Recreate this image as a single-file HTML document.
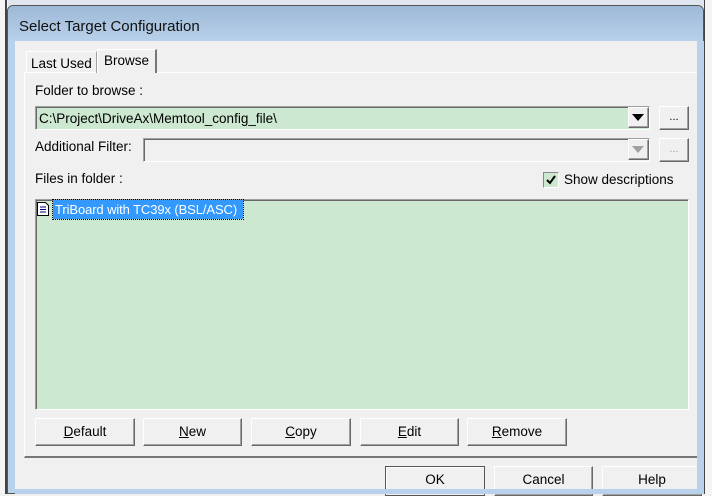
<!DOCTYPE html>
<html><head><style>
*{margin:0;padding:0;box-sizing:border-box}
body{width:712px;height:494px;overflow:hidden;background:#f0f0f0;font-family:"Liberation Sans",sans-serif;font-size:13px;color:#000;position:relative}
.a{position:absolute}
.btn{position:absolute;background:#f0f0f0;border:1px solid;border-color:#fff #696969 #696969 #fff;box-shadow:inset -1px -1px 0 #a0a0a0;text-align:center;font-size:13.5px;line-height:25px}
.sunk{position:absolute;border:1px solid;border-color:#a0a0a0 #fff #fff #a0a0a0;box-shadow:inset 1px 1px 0 #696969}
u{text-decoration:underline}
</style></head><body>
<div class="a" style="left:0;top:0;width:712px;height:6px;background:#dfe6ee"></div>
<div class="a" style="left:0;top:0;width:8px;height:494px;background:#f4f4f4"></div>
<div class="a" style="left:5px;top:0;width:2px;height:494px;background:#444"></div>
<div class="a" style="left:704px;top:0;width:8px;height:494px;background:#f4f4f4"></div>
<div class="a" style="left:704px;top:0;width:1px;height:494px;background:#444"></div>
<div class="a" style="left:7px;top:5px;width:697px;height:489px;background:#b9d1ea;border:1px solid #555;border-radius:6px 6px 0 0"></div>
<div class="a" style="left:8px;top:6px;width:695px;height:36px;background:linear-gradient(#9db9d7,#b9d1ea);border-radius:5px 5px 0 0"></div>
<div class="a" style="left:19px;top:18px;font-size:15px;color:#111">Select Target Configuration</div>
<div class="a" style="left:15px;top:41px;width:682px;height:448px;background:#f0f0f0"></div>
<div class="a" style="left:24px;top:72px;width:673px;height:386px;border-top:1px solid #fff;border-left:1px solid #fff;border-bottom:2px solid #777"></div>
<div class="a" style="left:26px;top:51px;width:71px;height:22px;border:1px solid #fff;border-right:1px solid #a0a0a0;border-bottom:none;padding:4px 0 0 4px;font-size:13.5px">Last Used</div>
<div class="a" style="left:97px;top:49px;width:60px;height:24px;background:#f0f0f0;border:1px solid #fff;border-right:2px solid #777;border-bottom:none;padding:3px 0 0 6px;font-size:13.5px">Browse</div>
<div class="a" style="left:35px;top:83px;font-size:13.5px">Folder to browse :</div>
<div class="sunk" style="left:35px;top:106px;width:615px;height:24px;background:#cde8d0"></div>
<div class="a" style="left:39px;top:111px;font-size:13.5px">C:\Project\DriveAx\Memtool_config_file\</div>
<div class="btn" style="left:628px;top:107px;width:21px;height:21px"></div>
<svg class="a" style="left:632px;top:114px" width="12" height="7"><path d="M0 0h12L6 7z" fill="#000"/></svg>
<div class="btn" style="left:659px;top:106px;width:30px;height:24px;font-size:11px;line-height:20px">...</div>
<div class="a" style="left:35px;top:139px;font-size:13.5px">Additional Filter:</div>
<div class="sunk" style="left:143px;top:138px;width:507px;height:24px;background:#f0f0f0"></div>
<div class="btn" style="left:628px;top:139px;width:21px;height:21px"></div>
<svg class="a" style="left:632px;top:146px" width="12" height="7"><path d="M0 0h12L6 7z" fill="#a0a0a0"/></svg>
<div class="btn" style="left:659px;top:138px;width:30px;height:24px;font-size:11px;line-height:20px;color:#a0a0a0">...</div>
<div class="a" style="left:35px;top:171px;font-size:13.5px">Files in folder :</div>
<div class="a" style="left:543px;top:172px;width:16px;height:16px;border:1px solid;border-color:#888 #fff #fff #888;background:#cde8d0"></div>
<svg class="a" style="left:546px;top:175px" width="10" height="10"><path d="M1 5l3 3 5-7" fill="none" stroke="#000" stroke-width="2"/></svg>
<div class="a" style="left:564px;top:172px;font-size:13.5px">Show descriptions</div>
<div class="sunk" style="left:35px;top:199px;width:654px;height:211px;background:#cde8d0"></div>
<svg class="a" style="left:37px;top:202px" width="12" height="14"><path d="M.5 .5h8l3 3v10h-11z" fill="#fff" stroke="#000"/><path d="M3 5h6M3 7.5h6M3 10h6" stroke="#000080"/></svg>
<div class="a" style="left:53px;top:200px;width:190px;height:19px;background:#3399ff;outline:1px dotted #000;color:#fff;font-size:13px;padding:2px 0 0 2px;white-space:nowrap;overflow:hidden;letter-spacing:-0.1px">TriBoard with TC39x (BSL/ASC)</div>
<div class="btn" style="left:35px;top:418px;width:100px;height:28px"><u>D</u>efault</div>
<div class="btn" style="left:143px;top:418px;width:99px;height:28px"><u>N</u>ew</div>
<div class="btn" style="left:251px;top:418px;width:100px;height:28px"><u>C</u>opy</div>
<div class="btn" style="left:360px;top:418px;width:99px;height:28px"><u>E</u>dit</div>
<div class="btn" style="left:467px;top:418px;width:100px;height:28px"><u>R</u>emove</div>
<div class="btn" style="left:385px;top:466px;width:100px;height:30px;border:1px solid #555;box-shadow:inset 1px 1px 0 #fff">OK</div>
<div class="btn" style="left:494px;top:466px;width:99px;height:30px">Cancel</div>
<div class="btn" style="left:602px;top:466px;width:100px;height:30px">Help</div>
<div class="a" style="left:697px;top:41px;width:7px;height:453px;background:#b9d1ea"></div>
<div class="a" style="left:15px;top:489px;width:689px;height:5px;background:#b9d1ea"></div>
</body></html>
